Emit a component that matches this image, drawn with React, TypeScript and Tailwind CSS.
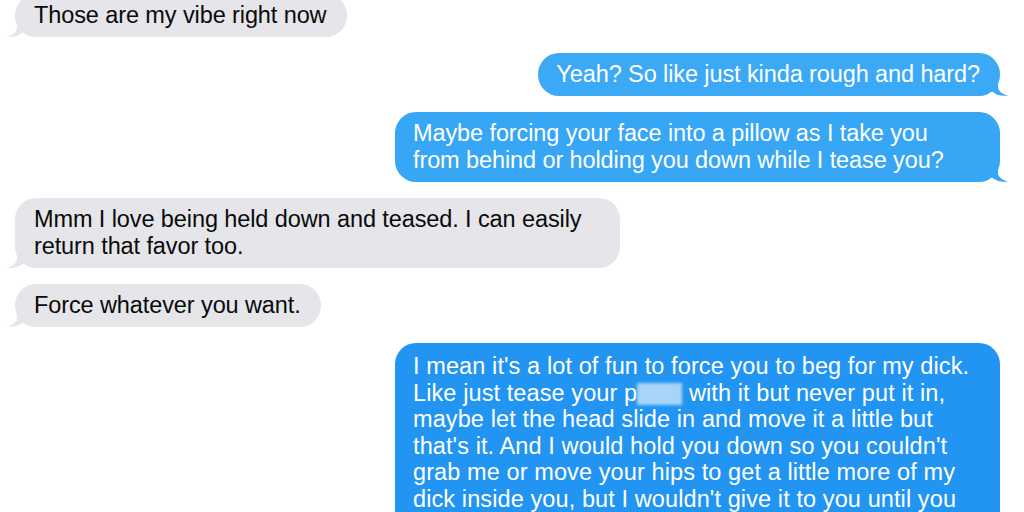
import React from 'react';

type Side = 'in' | 'out';

const Tail: React.FC<{ side: Side; color: string }> = ({ side, color }) => (
  <svg
    className={`absolute bottom-0 ${side === 'in' ? '-left-[8px]' : '-right-[8px] -scale-x-100'}`}
    width="22"
    height="20"
    viewBox="0 0 22 20"
  >
    <path d="M10 0 V11 C10 15 5 18.5 0 19.5 C6 20.5 12 19 16 15.5 L22 15.5 V0 Z" fill={color} />
  </svg>
);

const Bubble: React.FC<{
  side: Side;
  lines: React.ReactNode[];
  className?: string;
  color: string;
  textClass?: string;
}> = ({ side, lines, className = '', color, textClass = '' }) => (
  <div className={`flex ${side === 'in' ? 'justify-start' : 'justify-end'}`}>
    <div
      className={`relative rounded-[21px] py-[8px] pl-[19px] pr-[20px] ${className}`}
      style={{ background: color }}
    >
      <Tail side={side} color={color} />
      <div className={`relative leading-[27px] ${side === 'in' ? 'text-[#0a0a0a]' : 'text-white'} ${textClass}`}>
        {lines.map((l, i) => (
          <div key={i} className="whitespace-nowrap">
            {l}
          </div>
        ))}
      </div>
    </div>
  </div>
);

const GRAY = '#e5e5ea';

export default function App() {
  return (
    <div className="w-[1024px] h-[512px] overflow-hidden bg-white font-['Liberation_Sans',Arial,sans-serif] text-[23.5px] tracking-[-0.1px]">
      <div className="-mt-[6px] flex flex-col gap-[16px] pl-[15px] pr-[24px]">
        <Bubble side="in" color={GRAY} lines={['Those are my vibe right now']} />
        <Bubble side="out" color="#3ba9f6" className="!pl-[18px]" lines={['Yeah? So like just kinda rough and hard?']} />
        <Bubble
          side="out"
          color="#37a6f5"
          className="w-[605px] !pl-[18px]"
          lines={['Maybe forcing your face into a pillow as I take you', 'from behind or holding you down while I tease you?']}
        />
        <Bubble
          side="in"
          color={GRAY}
          className="w-[605px]"
          lines={['Mmm I love being held down and teased. I can easily', 'return that favor too.']}
        />
        <Bubble side="in" color={GRAY} lines={['Force whatever you want.']} />
        <Bubble
          side="out"
          color="#2295f2"
          className="w-[605px] h-[200px] !pl-[18px] !pt-[10px]"
          textClass="tracking-[0.1px] !leading-[26.5px]"
          lines={[
            "I mean it's a lot of fun to force you to beg for my dick.",
            <>
              Like just tease your p
              <span className="inline-block align-middle w-[45px] h-[22px] bg-[#a6d5f8] blur-[1.5px]" /> with it but
              never put it in,
            </>,
            'maybe let the head slide in and move it a little but',
            "that's it. And I would hold you down so you couldn't",
            'grab me or move your hips to get a little more of my',
            "dick inside you, but I wouldn't give it to you until you",
          ]}
        />
      </div>
    </div>
  );
}
